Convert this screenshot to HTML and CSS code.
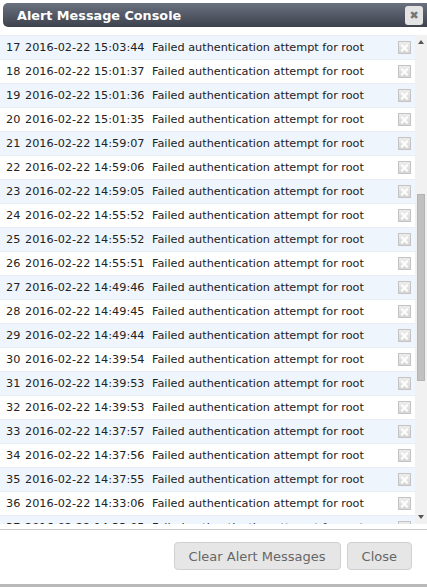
FILE: index.html
```html
<!DOCTYPE html>
<html>
<head>
    <title>Alert Message Console</title>
    <link rel="stylesheet" href="styles.css">
</head>
<body>
    <div id="alertDialog">
        <div class="titlebar">
            <b>Alert Message Console</b>
            <span class="title-close">&#x2716;</span>
        </div>
        <div class="list-wrap">
            <div class="list">
                <table id="alertTable"></table>
            </div>
            <div class="scrollbar">
                <div class="arrow arrow-up"></div>
                <div class="track">
                    <div class="track-before"></div>
                    <div class="thumb"></div>
                    <div class="track-after"></div>
                </div>
                <div class="arrow arrow-down"></div>
            </div>
        </div>
        <div class="footer">
            <button class="btn">Clear Alert Messages</button>
            <button class="btn">Close</button>
        </div>
    </div>

    <script type="text/javascript">
        const times = ['15:03:44', '15:01:37', '15:01:36', '15:01:35', '14:59:07', '14:59:06', '14:59:05',
            '14:55:52', '14:55:52', '14:55:51', '14:49:46', '14:49:45', '14:49:44', '14:39:54',
            '14:39:53', '14:39:53', '14:37:57', '14:37:56', '14:37:55', '14:33:06', '14:33:05'];
        const table = document.getElementById('alertTable');
        times.forEach(function(t, i) {
            const row = table.insertRow();
            row.innerHTML = '<td class="num">' + (17 + i) + '</td>' +
                '<td class="date">2016-02-22 ' + t + '</td>' +
                '<td class="msg">Failed authentication attempt for root</td>' +
                '<td class="del"><span class="del-icon"></span></td>';
        });
    </script>
</body>
</html>
```

FILE: styles.css
```css
body {
    margin: 0;
    background-color: #b9b9b9;
    font-family: "DejaVu Sans", Verdana, sans-serif;
}

#alertDialog {
    width: 427px;
    height: 584px;
    background-color: #fff;
    box-sizing: border-box;
    padding-top: 3px;
    display: flex;
    flex-direction: column;
}

.titlebar {
    margin-left: 3px;
    height: 24px;
    border-radius: 5px 0 0 5px;
    background: linear-gradient(#6a717f, #3d424d);
    display: flex;
    align-items: center;
    justify-content: space-between;
    padding-left: 14px;
    color: #fff;
    font-size: 12.8px;
}

.title-close {
    width: 18px;
    height: 19px;
    margin-right: 4px;
    border-radius: 3px;
    background-color: #e4e4e4;
    color: #777;
    font-size: 11px;
    display: flex;
    align-items: center;
    justify-content: center;
}

.list-wrap {
    margin-top: 8px;
    height: 489px;
    display: flex;
    border-bottom: 1px solid #c9c9c9;
    padding-bottom: 5px;
}

.list {
    flex: 1;
    overflow: hidden;
}

table {
    border-collapse: collapse;
    width: 100%;
    font-size: 11.25px;
    color: #222;
}

tr {
    height: 24px;
    border-top: 1px solid #e9eef4;
}

tr:nth-child(odd) td {
    background-color: #eef5fd;
}

td {
    padding: 0;
    white-space: nowrap;
}

.num {
    width: 17px;
    padding-left: 6px;
}

.date {
    width: 124px;
    padding-left: 2px;
}

.msg {
    padding-left: 3px;
}

.del {
    width: 26px;
    text-align: left;
}

.del-icon {
    display: block;
    width: 11px;
    height: 11px;
    border: 1px solid #c4c4c4;
    background: linear-gradient(#ececec, #d6d6d6);
    position: relative;
    margin-left: 9px;
}

.del-icon::before,
.del-icon::after {
    content: "";
    position: absolute;
    left: 1px;
    top: 5px;
    width: 9px;
    height: 2px;
    background-color: #fff;
    transform: rotate(45deg);
}

.del-icon::after {
    transform: rotate(-45deg);
}

.scrollbar {
    width: 12px;
    background-color: #f1f1f1;
    display: flex;
    flex-direction: column;
}

.arrow {
    height: 14px;
    display: flex;
    justify-content: center;
    align-items: center;
}

.arrow-up::before {
    content: "";
    border-left: 3px solid transparent;
    border-right: 3px solid transparent;
    border-bottom: 4px solid #555;
}

.arrow-down::before {
    content: "";
    border-left: 3px solid transparent;
    border-right: 3px solid transparent;
    border-top: 4px solid #555;
}

.track {
    flex: 1;
    display: flex;
    flex-direction: column;
    padding: 0 2px;
}

.track-before {
    flex: 147;
}

.thumb {
    height: 185px;
    background-color: #c1c1c1;
    border: 1px solid #b3b3b3;
}

.track-after {
    flex: 130;
}

.footer {
    flex: 1;
    display: flex;
    justify-content: flex-end;
    align-items: flex-start;
    gap: 6px;
    padding: 12px 15px 0 0;
}

.btn {
    height: 28px;
    padding: 0 14px;
    border: 1px solid #d0d0d0;
    border-radius: 4px;
    background-color: #e6e6e6;
    color: #666;
    font-family: "DejaVu Sans", Verdana, sans-serif;
    font-size: 13px;
}
```
